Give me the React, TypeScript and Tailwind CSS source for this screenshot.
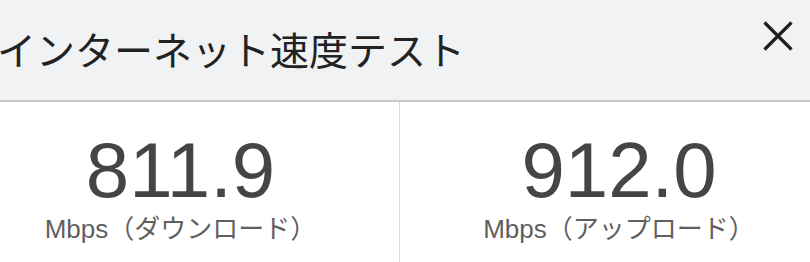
const results = [
  { value: "811.9", label: "Mbps（ダウンロード）" },
  { value: "912.0", label: "Mbps（アップロード）" },
]

function CloseIcon() {
  return (
    <svg width="30" height="30" viewBox="0 0 30 30" fill="none" stroke="currentColor" strokeWidth="3.2">
      <path d="M1.5 1.5 L28.5 28.5 M28.5 1.5 L1.5 28.5" />
    </svg>
  )
}

export default function App() {
  return (
    <div className="w-[810px] h-[262px] overflow-hidden bg-white">
      <div className="ml-[-38px] w-[877px]">
        {/* Header */}
        <div className="h-[102px] flex items-center justify-between bg-[#f1f2f4] border-b-2 border-[#c9c9cb] pl-[35px] pr-[46px]">
          <h1 className="text-[39px] leading-none text-[#222] font-['Noto_Sans_CJK_JP',sans-serif] pb-[4px]">
            インターネット速度テスト
          </h1>
          <button type="button" className="text-[#1e1e1e] pb-[28px]">
            <CloseIcon />
          </button>
        </div>

        {/* Results */}
        <div className="flex h-[160px]">
          {results.map((r, i) => (
            <div
              key={r.label}
              className={`w-[438px] flex flex-col items-center pt-[29px] ${i === 0 ? "border-r border-[#dcdcdc]" : ""}`}
            >
              <p className="text-[78px] leading-none text-[#454545] font-['Liberation_Sans',sans-serif]">
                {r.value}
              </p>
              <p className="text-[26px] leading-none mt-[7px] text-[#5f5f5f] font-['Liberation_Sans','Noto_Sans_CJK_JP',sans-serif]">
                {r.label}
              </p>
            </div>
          ))}
        </div>
      </div>
    </div>
  )
}
